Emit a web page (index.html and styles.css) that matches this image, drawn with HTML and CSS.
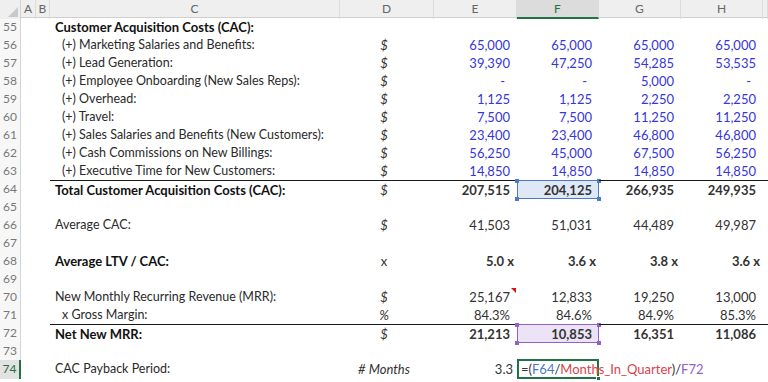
FILE: index.html
```html
<!DOCTYPE html>
<html>
<head>
<meta charset="utf-8">
<link rel="stylesheet" href="styles.css">
</head>
<body>
<div class="sheet">
  <div class="row head">
    <div class="corner"><span class="tri"></span></div>
    <div class="ch">A</div><div class="ch">B</div><div class="ch">C</div><div class="ch">D</div>
    <div class="ch">E</div><div class="ch sel">F</div><div class="ch">G</div><div class="ch">H</div><div class="ch"></div>
  </div>

  <div class="row"><div class="rh">55</div><div></div><div></div><div class="c b">Customer Acquisition Costs (CAC):</div><div class="d"></div><div class="n"></div><div class="n"></div><div class="n"></div><div class="n"></div><div></div></div>
  <div class="row"><div class="rh">56</div><div></div><div></div><div class="c ind">(+) Marketing Salaries and Benefits:</div><div class="d">$</div><div class="n in">65,000</div><div class="n in">65,000</div><div class="n in">65,000</div><div class="n in">65,000</div><div></div></div>
  <div class="row"><div class="rh">57</div><div></div><div></div><div class="c ind">(+) Lead Generation:</div><div class="d">$</div><div class="n in">39,390</div><div class="n in">47,250</div><div class="n in">54,285</div><div class="n in">53,535</div><div></div></div>
  <div class="row"><div class="rh">58</div><div></div><div></div><div class="c ind">(+) Employee Onboarding (New Sales Reps):</div><div class="d">$</div><div class="n in dash">-</div><div class="n in dash">-</div><div class="n in">5,000</div><div class="n in dash">-</div><div></div></div>
  <div class="row"><div class="rh">59</div><div></div><div></div><div class="c ind">(+) Overhead:</div><div class="d">$</div><div class="n in">1,125</div><div class="n in">1,125</div><div class="n in">2,250</div><div class="n in">2,250</div><div></div></div>
  <div class="row"><div class="rh">60</div><div></div><div></div><div class="c ind">(+) Travel:</div><div class="d">$</div><div class="n in">7,500</div><div class="n in">7,500</div><div class="n in">11,250</div><div class="n in">11,250</div><div></div></div>
  <div class="row"><div class="rh">61</div><div></div><div></div><div class="c ind">(+) Sales Salaries and Benefits (New Customers):</div><div class="d">$</div><div class="n in">23,400</div><div class="n in">23,400</div><div class="n in">46,800</div><div class="n in">46,800</div><div></div></div>
  <div class="row"><div class="rh">62</div><div></div><div></div><div class="c ind">(+) Cash Commissions on New Billings:</div><div class="d">$</div><div class="n in">56,250</div><div class="n in">45,000</div><div class="n in">67,500</div><div class="n in">56,250</div><div></div></div>
  <div class="row"><div class="rh">63</div><div></div><div></div><div class="c ind">(+) Executive Time for New Customers:</div><div class="d">$</div><div class="n in">14,850</div><div class="n in">14,850</div><div class="n in">14,850</div><div class="n in">14,850</div><div></div></div>
  <div class="row"><div class="rh">64</div><div></div><div></div><div class="c b top">Total Customer Acquisition Costs (CAC):</div><div class="d top">$</div><div class="n b top">207,515</div><div class="n b top ref blue"><span>204,125</span><i class="h tl"></i><i class="h tr"></i><i class="h bl"></i><i class="h br"></i></div><div class="n b top">266,935</div><div class="n b top">249,935</div><div class="top"></div></div>
  <div class="row"><div class="rh">65</div></div>
  <div class="row"><div class="rh">66</div><div></div><div></div><div class="c">Average CAC:</div><div class="d">$</div><div class="n">41,503</div><div class="n">51,031</div><div class="n">44,489</div><div class="n">49,987</div><div></div></div>
  <div class="row"><div class="rh">67</div></div>
  <div class="row"><div class="rh">68</div><div></div><div></div><div class="c b">Average LTV / CAC:</div><div class="d up">x</div><div class="n b mx">5.0 x</div><div class="n b mx">3.6 x</div><div class="n b mx">3.8 x</div><div class="n b mx">3.6 x</div><div></div></div>
  <div class="row"><div class="rh">69</div></div>
  <div class="row"><div class="rh">70</div><div></div><div></div><div class="c">New Monthly Recurring Revenue (MRR):</div><div class="d">$</div><div class="n note">25,167</div><div class="n">12,833</div><div class="n">19,250</div><div class="n">13,000</div><div></div></div>
  <div class="row"><div class="rh">71</div><div></div><div></div><div class="c ind">x Gross Margin:</div><div class="d">%</div><div class="n">84.3%</div><div class="n">84.6%</div><div class="n">84.9%</div><div class="n">85.3%</div><div></div></div>
  <div class="row"><div class="rh">72</div><div></div><div></div><div class="c b top">Net New MRR:</div><div class="d top">$</div><div class="n b top">21,213</div><div class="n b top ref purple"><span>10,853</span><i class="h tl"></i><i class="h tr"></i><i class="h bl"></i><i class="h br"></i></div><div class="n b top">16,351</div><div class="n b top">11,086</div><div class="top"></div></div>
  <div class="row"><div class="rh">73</div></div>
  <div class="row"><div class="rh act">74</div><div></div><div></div><div class="c">CAC Payback Period:</div><div class="d">#&nbsp;Months</div><div class="n pb">3.3</div><div class="edit"><span class="fx">=(<span class="fb">F64</span>/<span class="fr">Months_In_Quarter</span>)/<span class="fp">F72</span></span><i class="gh"></i></div><div></div><div></div><div></div></div>
</div>
</body>
</html>
```

FILE: styles.css
```css
* { box-sizing: border-box; margin: 0; padding: 0; }
html, body { background: #ffffff; }
body {
  width: 768px;
  height: 382px;
  overflow: hidden;
  font-family: Lato, "Open Sans", sans-serif;
  font-size: 13px;
  color: #222;
}
.sheet { display: flex; flex-direction: column; }
.row {
  display: grid;
  grid-template-columns: 21px 15px 14px 290px 94px 83px 82px 82px 82px 5px;
  height: 18px;
  line-height: 18px;
  white-space: nowrap;
}
.row > div { min-width: 0; }
.head {
  background: #efefef;
  border-bottom: 1px solid #cfcfcf;
  color: #666;
  font-size: 12px;
  line-height: 17px;
}
.corner { position: relative; background: #efefef; border-right: 1px solid #d4d4d4; }
.corner .tri {
  position: absolute; right: 2px; bottom: 2px;
  width: 0; height: 0;
  border-left: 10px solid transparent;
  border-bottom: 10px solid #c9c9c9;
}
.ch { text-align: center; border-right: 1px solid #dcdcdc; }
.ch.sel { background: #dcdcdc; color: #217346; border-bottom: 2px solid #217346; }
.rh {
  background: #f7f7f7;
  border-right: 1px solid #d4d4d4;
  color: #777;
  font-size: 12px;
  text-align: center;
}
.rh.act { color: #217346; border-right: 2px solid #217346; background: #e2e2e2; }
.c { padding-left: 5px; overflow: visible; font-size: 12.5px; color: #2a2a2a; }
.c.ind { padding-left: 12px; }
.c.b { font-size: 13px; }
.b { font-weight: 700; color: #111; }
.d { text-align: center; font-style: italic; color: #333; padding-right: 6px; }
.d.up { font-style: normal; }
.n { text-align: right; padding-right: 7px; color: #333; position: relative; }
.n.in { color: #3636dd; }
.n.dash { padding-right: 12px; }
.n.mx { padding-right: 3px; }
.n.pb { padding-right: 4px; }
.top { border-top: 1px solid #1a1a1a; }
.note::after {
  content: "";
  position: absolute; right: 1px; top: 0;
  border-left: 5px solid transparent;
  border-top: 5px solid #e01010;
}
.ref { position: relative; }
.ref.blue { background: #dfe8f7; outline: 1.5px solid #4d78cc; outline-offset: -1px; }
.ref.purple { background: #ece3f6; outline: 1.5px solid #9061c9; outline-offset: -1px; }
.h { position: absolute; width: 4px; height: 4px; }
.blue .h { background: #4d78cc; }
.purple .h { background: #9061c9; }
.h.tl { left: -2px; top: -2px; }
.h.tr { right: -2px; top: -2px; }
.h.bl { left: -2px; bottom: -2px; }
.h.br { right: -2px; bottom: -2px; }
.edit {
  position: relative;
  border: 2px solid #217346;
  margin-top: -1px;
  height: 20px;
  line-height: 16px;
  overflow: visible;
  padding-left: 2px;
  color: #333;
}
.fx { position: relative; z-index: 2; }
.fb { color: #4d78cc; }
.fr { color: #d8434b; }
.fp { color: #9061c9; }
.gh {
  position: absolute; right: -4px; bottom: -4px;
  width: 5px; height: 5px;
  background: #217346; border: 1px solid #fff;
}
```
